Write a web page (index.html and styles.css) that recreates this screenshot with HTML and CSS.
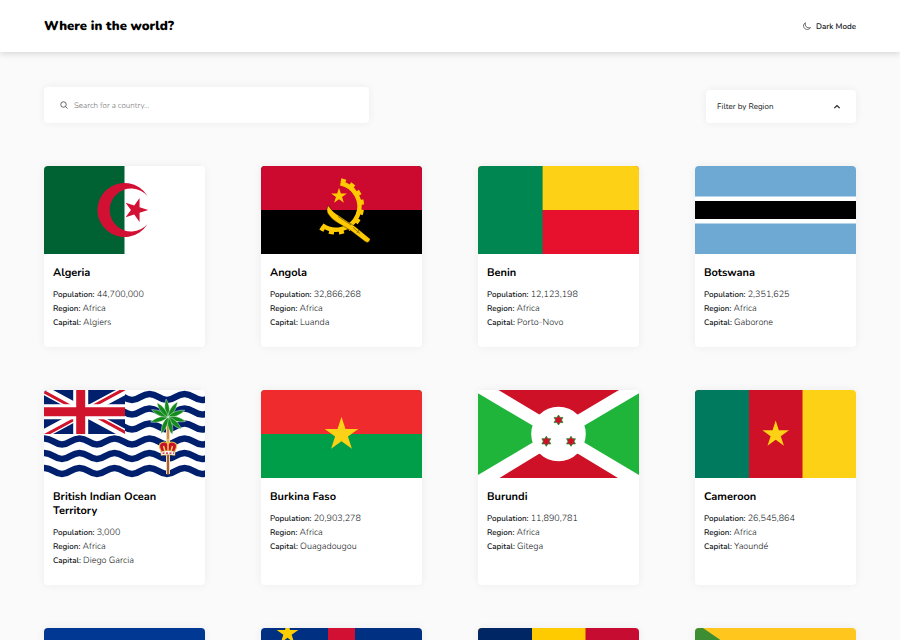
FILE: index.html
```
<!DOCTYPE html>
<html lang="en">
<head>
  <meta charset="UTF-8">
  <meta name="viewport" content="width=device-width, initial-scale=1.0">
  <title>Where in the world?</title>
  <link rel="stylesheet" href="styles.css">
</head>
<body>
  <!-- shared shapes -->
  <svg class="defs" aria-hidden="true">
    <defs>
      <polygon id="star" points="0,-10 2.25,-3.09 9.51,-3.09 3.63,1.18 5.88,8.09 0,3.82 -5.88,8.09 -3.63,1.18 -9.51,-3.09 -2.25,-3.09"/>
      <path id="star6" d="M0-5L1.5-2.6H4.4L3 0l1.4 2.6H1.5L0 5l-1.5-2.4h-2.9L-3 0l-1.4-2.6h2.9z"/>
      <path id="wave" d="M-17 3C-9 3-8-3 .5-3S10 3 18 3s9-6 17.5-6S45 3 53 3s9-6 17.5-6S80 3 88 3s9-6 17.5-6S115 3 123 3s9-6 17.5-6S150 3 158 3s9-6 17-6"/>
      <path id="leaf" d="M0 0C-3-5-3-12 0-18C3-12 3-5 0 0z"/>
    </defs>
  </svg>

  <header class="header">
    <h1 class="logo">Where in the world?</h1>
    <button class="theme-btn" type="button">
      <svg class="moon" viewBox="0 0 16 16" aria-hidden="true"><path d="M5 1.5C3 8 7.5 13 15 11.2C12 16 5.5 16 2.5 12C-.5 8 1 3.5 5 1.5z"/></svg>
      Dark Mode
    </button>
  </header>

  <main class="main">
    <form class="toolbar">
      <label class="search">
        <svg class="search-icon" viewBox="0 0 16 16" aria-hidden="true"><circle cx="7" cy="7" r="5.5"/><path d="M11 11l4 4"/></svg>
        <input class="search-input" type="text" placeholder="Search for a country..." aria-label="Search for a country">
      </label>
      <div class="filter">
        <select class="filter-select" aria-label="Filter by Region">
          <option>Filter by Region</option>
          <option>Africa</option>
          <option>Americas</option>
          <option>Asia</option>
          <option>Europe</option>
          <option>Oceania</option>
        </select>
        <svg class="chevron" viewBox="0 0 12 8" aria-hidden="true"><path d="M2 6.5l4-4 4 4"/></svg>
      </div>
    </form>

    <section class="countries">
      <article class="card">
        <svg class="flag" viewBox="0 0 161 88" preserveAspectRatio="xMidYMid slice" role="img" aria-label="Flag of Algeria">
          <path fill="#fff" d="M0 0h161v88H0z"/>
          <path fill="#006233" d="M0 0h80.5v88H0z"/>
          <path fill="#d21034" d="M103.5 30A27 27 0 1 0 103.5 58A21.5 21.5 0 1 1 103.5 30z"/>
          <use href="#star" fill="#d21034" transform="translate(91.7 44) rotate(90) scale(1.25)"/>
        </svg>
        <div class="info">
          <h2 class="name">Algeria</h2>
          <p class="row"><b>Population:</b> 44,700,000</p>
          <p class="row"><b>Region:</b> Africa</p>
          <p class="row"><b>Capital:</b> Algiers</p>
        </div>
      </article>

      <article class="card">
        <svg class="flag" viewBox="0 0 161 88" preserveAspectRatio="xMidYMid slice" role="img" aria-label="Flag of Angola">
          <path d="M0 0h161v88H0z"/>
          <path fill="#cc092f" d="M0 0h161v44H0z"/>
          <g fill="none" stroke="#ffcb00">
            <path stroke-width="4.5" d="M79.5 17.2A23.5 23.5 0 1 1 61.2 59.3"/>
            <path stroke-width="3.5" stroke-dasharray="5 5" d="M80 14A26.7 26.7 0 1 1 59.3 62"/>
          </g>
          <use href="#star" fill="#ffcb00" transform="translate(78 30) scale(.83)"/>
          <path fill="#ffcb00" stroke="#000" stroke-width=".4" d="M67.3 39.5Q65 43 66.5 47Q70 53 77 57L89 64L104 75.5Q107 77.5 108.5 75T108 72L94 60.5L79 50.5Q71 46 67.3 39.5z"/>
          <path fill="none" stroke="#6b4d00" stroke-width=".7" d="M77 50.5l13 8.5M92 61.5l7 6M96 67l2-3"/>
        </svg>
        <div class="info">
          <h2 class="name">Angola</h2>
          <p class="row"><b>Population:</b> 32,866,268</p>
          <p class="row"><b>Region:</b> Africa</p>
          <p class="row"><b>Capital:</b> Luanda</p>
        </div>
      </article>

      <article class="card">
        <svg class="flag" viewBox="0 0 161 88" preserveAspectRatio="xMidYMid slice" role="img" aria-label="Flag of Benin">
          <path fill="#e8112d" d="M0 0h161v88H0z"/>
          <path fill="#fcd116" d="M0 0h161v44H0z"/>
          <path fill="#008751" d="M0 0h64.6v88H0z"/>
        </svg>
        <div class="info">
          <h2 class="name">Benin</h2>
          <p class="row"><b>Population:</b> 12,123,198</p>
          <p class="row"><b>Region:</b> Africa</p>
          <p class="row"><b>Capital:</b> Porto-Novo</p>
        </div>
      </article>

      <article class="card">
        <svg class="flag" viewBox="0 0 161 88" preserveAspectRatio="xMidYMid slice" role="img" aria-label="Flag of Botswana">
          <path fill="#6da9d2" d="M0 0h161v88H0z"/>
          <path fill="#fff" d="M0 30.5h161v27H0z"/>
          <path d="M0 35h161v18H0z"/>
        </svg>
        <div class="info">
          <h2 class="name">Botswana</h2>
          <p class="row"><b>Population:</b> 2,351,625</p>
          <p class="row"><b>Region:</b> Africa</p>
          <p class="row"><b>Capital:</b> Gaborone</p>
        </div>
      </article>

      <article class="card">
        <svg class="flag" viewBox="0 0 161 88" preserveAspectRatio="xMidYMid slice" role="img" aria-label="Flag of British Indian Ocean Territory">
          <path fill="#fff" d="M0 0h161v88H0z"/>
          <g fill="none" stroke="#00206e" stroke-width="6.5">
            <use href="#wave" y="7"/>
            <use href="#wave" y="21.5"/>
            <use href="#wave" y="36.5"/>
            <use href="#wave" y="51.5"/>
            <use href="#wave" y="66"/>
            <use href="#wave" y="81"/>
          </g>
          <!-- union jack -->
          <svg width="81" height="44" viewBox="0 0 81 44">
            <path fill="#00206e" d="M0 0h81v44H0z"/>
            <path stroke="#fff" stroke-width="9" d="M-6-3l93 50M87-3l-93 50"/>
            <path stroke="#cf142b" stroke-width="3" d="M-6-1.5L40 23.5M87 45.5L41 20.5M86-4L40 21M-5 48.5L41 23.5"/>
            <path stroke="#fff" stroke-width="15" d="M36.7 0v44M0 21.7h81"/>
            <path stroke="#cf142b" stroke-width="9" d="M36.7 0v44M0 21.7h81"/>
          </svg>
          <!-- palm and crown -->
          <path stroke="#fff" stroke-width="4" d="M124 28v56"/>
          <path stroke="#a9602b" stroke-width="2.5" d="M124 28v56.5"/>
          <path stroke="#f0c24b" d="M124 36v14"/>
          <g fill="#128a1c" stroke="#fff" stroke-width=".4" transform="translate(124 27)">
            <use href="#leaf" transform="rotate(-6)"/>
            <use href="#leaf" transform="rotate(32)"/>
            <use href="#leaf" transform="rotate(68)"/>
            <use href="#leaf" transform="rotate(104)"/>
            <use href="#leaf" transform="rotate(132)"/>
            <use href="#leaf" transform="rotate(166)"/>
            <use href="#leaf" transform="rotate(202)"/>
            <use href="#leaf" transform="rotate(254)"/>
            <use href="#leaf" transform="rotate(294)"/>
            <use href="#leaf" transform="rotate(322)"/>
          </g>
          <path fill="#c8102e" stroke="#e8c04a" stroke-width="1.2" d="M117.5 62Q113 54 118 52.5Q122 51 124 54Q126 51 130 52.5Q135 54 130.5 62z"/>
          <path fill="none" stroke="#f7d34c" stroke-width="1.5" d="M124 49v12M119.5 56l1.5 5M128.5 56l-1.5 5"/>
          <path fill="#fff" stroke="#b98a1d" stroke-width=".6" d="M117 61.5q7-2 14 0v4q-7-1.5-14 0z"/>
          <path stroke="#c8102e" stroke-width="1.2" stroke-dasharray="2 1.5" d="M118.5 63.2h11.5"/>
        </svg>
        <div class="info">
          <h2 class="name">British Indian Ocean Territory</h2>
          <p class="row"><b>Population:</b> 3,000</p>
          <p class="row"><b>Region:</b> Africa</p>
          <p class="row"><b>Capital:</b> Diego Garcia</p>
        </div>
      </article>

      <article class="card">
        <svg class="flag" viewBox="0 0 161 88" preserveAspectRatio="xMidYMid slice" role="img" aria-label="Flag of Burkina Faso">
          <path fill="#009e49" d="M0 0h161v88H0z"/>
          <path fill="#ef2b2d" d="M0 0h161v44H0z"/>
          <use href="#star" fill="#fcd116" transform="translate(80.5 44.5) scale(1.77)"/>
        </svg>
        <div class="info">
          <h2 class="name">Burkina Faso</h2>
          <p class="row"><b>Population:</b> 20,903,278</p>
          <p class="row"><b>Region:</b> Africa</p>
          <p class="row"><b>Capital:</b> Ouagadougou</p>
        </div>
      </article>

      <article class="card">
        <svg class="flag" viewBox="0 0 161 88" preserveAspectRatio="xMidYMid slice" role="img" aria-label="Flag of Burundi">
          <path fill="#fff" d="M0 0h161v88H0z"/>
          <path fill="#1eb53a" d="M0 3.3L69 44L0 85zM161 3.3L92 44l69 41z"/>
          <path fill="#ce1126" d="M20.5 0L80.5 36L141 0zM21.5 88L80.5 52L140 88z"/>
          <circle cx="80.5" cy="44" r="27.3" fill="#fff"/>
          <g fill="#ce1126" stroke="#1e8a35" stroke-width=".8">
            <use href="#star6" x="80.5" y="30"/>
            <use href="#star6" x="68.3" y="51.3"/>
            <use href="#star6" x="93" y="51.3"/>
          </g>
        </svg>
        <div class="info">
          <h2 class="name">Burundi</h2>
          <p class="row"><b>Population:</b> 11,890,781</p>
          <p class="row"><b>Region:</b> Africa</p>
          <p class="row"><b>Capital:</b> Gitega</p>
        </div>
      </article>

      <article class="card">
        <svg class="flag" viewBox="0 0 161 88" preserveAspectRatio="xMidYMid slice" role="img" aria-label="Flag of Cameroon">
          <path fill="#fcd116" d="M0 0h161v88H0z"/>
          <path fill="#ce1126" d="M0 0h107.5v88H0z"/>
          <path fill="#007a5e" d="M0 0h54v88H0z"/>
          <use href="#star" fill="#fcd116" transform="translate(80.7 44.5) scale(1.4)"/>
        </svg>
        <div class="info">
          <h2 class="name">Cameroon</h2>
          <p class="row"><b>Population:</b> 26,545,864</p>
          <p class="row"><b>Region:</b> Africa</p>
          <p class="row"><b>Capital:</b> Yaoundé</p>
        </div>
      </article>

      <article class="card">
        <svg class="flag" viewBox="0 0 161 88" preserveAspectRatio="xMidYMid slice" role="img" aria-label="Flag of Cabo Verde">
          <path fill="#003893" d="M0 0h161v88H0z"/>
          <path fill="#fff" d="M0 44h161v22H0z"/>
          <path fill="#cf2027" d="M0 51h161v8H0z"/>
        </svg>
        <div class="info">
          <h2 class="name">Cabo Verde</h2>
          <p class="row"><b>Population:</b> 555,988</p>
          <p class="row"><b>Region:</b> Africa</p>
          <p class="row"><b>Capital:</b> Praia</p>
        </div>
      </article>

      <article class="card">
        <svg class="flag" viewBox="0 0 161 88" preserveAspectRatio="xMidYMid slice" role="img" aria-label="Flag of Central African Republic">
          <path fill="#003082" d="M0 0h161v22H0z"/>
          <path fill="#fff" d="M0 22h161v22H0z"/>
          <path fill="#289728" d="M0 44h161v22H0z"/>
          <path fill="#ffce00" d="M0 66h161v22H0z"/>
          <path fill="#d21034" d="M67 0h27v88H67z"/>
          <use href="#star" fill="#ffce00" transform="translate(26.5 5.5) scale(1.14)"/>
        </svg>
        <div class="info">
          <h2 class="name">Central African Republic</h2>
          <p class="row"><b>Population:</b> 4,829,764</p>
          <p class="row"><b>Region:</b> Africa</p>
          <p class="row"><b>Capital:</b> Bangui</p>
        </div>
      </article>

      <article class="card">
        <svg class="flag" viewBox="0 0 161 88" preserveAspectRatio="xMidYMid slice" role="img" aria-label="Flag of Chad">
          <path fill="#c60c30" d="M0 0h161v88H0z"/>
          <path fill="#fecb00" d="M0 0h107.5v88H0z"/>
          <path fill="#002664" d="M0 0h54v88H0z"/>
        </svg>
        <div class="info">
          <h2 class="name">Chad</h2>
          <p class="row"><b>Population:</b> 16,425,859</p>
          <p class="row"><b>Region:</b> Africa</p>
          <p class="row"><b>Capital:</b> N'Djamena</p>
        </div>
      </article>

      <article class="card">
        <svg class="flag" viewBox="0 0 161 88" preserveAspectRatio="xMidYMid slice" role="img" aria-label="Flag of Comoros">
          <path fill="#ffc61e" d="M0 0h161v22H0z"/>
          <path fill="#fff" d="M0 22h161v22H0z"/>
          <path fill="#ce1126" d="M0 44h161v22H0z"/>
          <path fill="#3a75c4" d="M0 66h161v22H0z"/>
          <path fill="#3d8e33" d="M0 0h8L72 44L8 88H0z"/>
        </svg>
        <div class="info">
          <h2 class="name">Comoros</h2>
          <p class="row"><b>Population:</b> 869,595</p>
          <p class="row"><b>Region:</b> Africa</p>
          <p class="row"><b>Capital:</b> Moroni</p>
        </div>
      </article>
    </section>
  </main>
</body>
</html>
```
FILE: styles.css
```
* {
  box-sizing: border-box;
}
body, h1, h2, p {
  margin: 0;
}
body {
  background-color: #fafafa;
  color: #111517;
  font-family: Nunito, Lato, "Open Sans", sans-serif;
  font-size: 9px;
  text-rendering: geometricPrecision;
}
button, input, select {
  font-family: inherit;
  color: inherit;
  text-rendering: inherit;
}
.defs {
  position: absolute;
  width: 0;
  height: 0;
}

.header {
  display: flex;
  justify-content: space-between;
  align-items: center;
  height: 52px;
  padding: 0 44px;
  background-color: #fff;
  box-shadow: 0 2px 6px rgba(0, 0, 0, .14);
}
.logo {
  font-size: 13px;
  font-weight: 900;
  line-height: 20px;
  color: #000;
}
.theme-btn {
  display: flex;
  align-items: center;
  gap: 5px;
  padding: 0;
  border: 0;
  background: none;
  font-size: 8px;
  font-weight: 600;
  cursor: pointer;
}
.moon {
  width: 8px;
  height: 8px;
  fill: none;
  stroke: #333;
  stroke-width: 1.4;
}

.main {
  padding: 35px 44px;
}
.toolbar {
  display: flex;
  justify-content: space-between;
  align-items: flex-end;
  margin-bottom: 43px;
}
.search {
  display: flex;
  align-items: center;
  gap: 6px;
  width: 40%;
  height: 36px;
  padding: 0 16px;
  border-radius: 4px;
  background-color: #fff;
  box-shadow: 0 0 8px rgba(0, 0, 0, .06);
}
.search-icon {
  width: 8px;
  height: 8px;
  fill: none;
  stroke: #444;
  stroke-width: 1.6;
}
.search-input {
  flex: 1;
  min-width: 0;
  padding: 0;
  border: 0;
  outline: none;
  background: none;
  font-size: 8px;
  font-weight: 300;
}
.search-input::placeholder {
  color: #777;
}
.filter {
  position: relative;
  width: 150px;
  border-radius: 4px;
  background-color: #fff;
  box-shadow: 0 0 8px rgba(0, 0, 0, .06);
}
.filter-select {
  display: block;
  width: 100%;
  height: 33px;
  padding: 0 32px 0 11px;
  border: 0;
  appearance: none;
  background: none;
  font-size: 8px;
}
.chevron {
  position: absolute;
  right: 15px;
  top: 13px;
  width: 8px;
  height: 7px;
  fill: none;
  stroke: #222;
  stroke-width: 1.8;
  pointer-events: none;
}

.countries {
  display: grid;
  grid-template-columns: repeat(4, 1fr);
  gap: 43px 56px;
}
.card {
  overflow: hidden;
  border-radius: 4px;
  background-color: #fff;
  box-shadow: 0 0 10px rgba(0, 0, 0, .06);
}
.flag {
  display: block;
  width: 100%;
  height: 88px;
}
.info {
  padding: 12px 9px 17px;
}
.name {
  margin-bottom: 8px;
  font-size: 11px;
  font-weight: 700;
  line-height: 14px;
  color: #000;
}
.row {
  font-weight: 300;
  line-height: 14px;
}
.row b {
  font-size: 8px;
  font-weight: 600;
  line-height: 8px;
}
```
